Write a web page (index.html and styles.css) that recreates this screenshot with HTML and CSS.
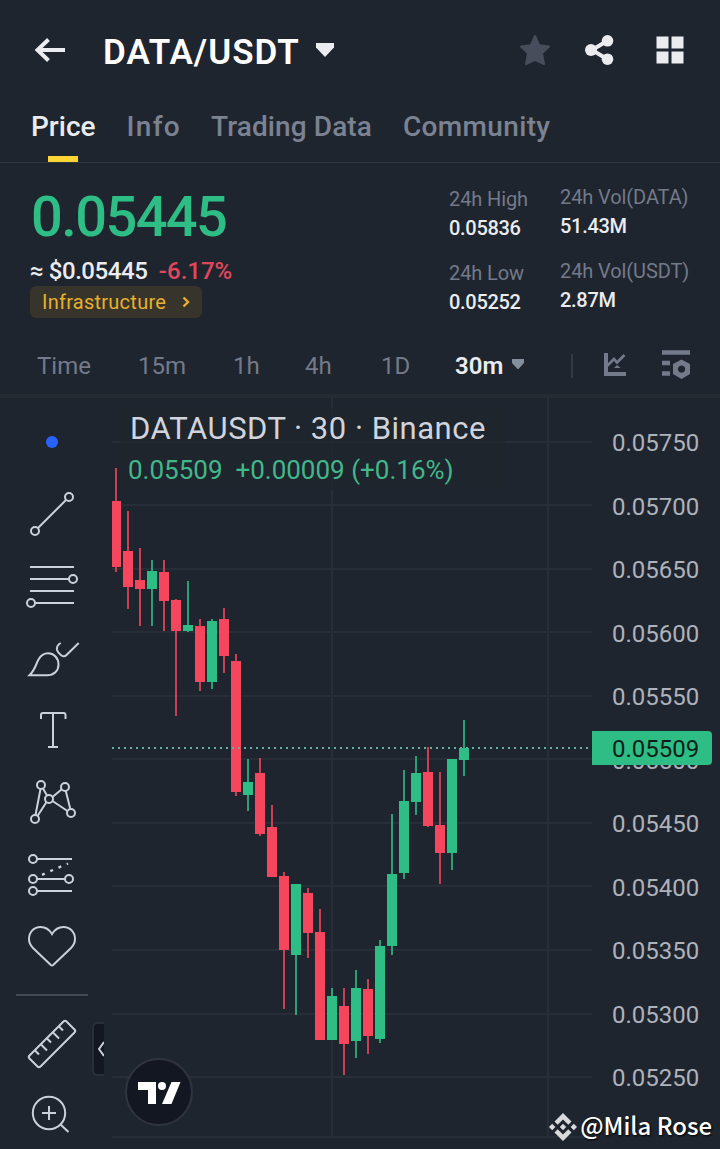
FILE: index.html
```html
<!DOCTYPE html>
<html lang="en">
<head>
    <meta charset="UTF-8">
    <meta name="viewport" content="width=device-width, initial-scale=1.0">
    <link rel="stylesheet" href="styles.css">
    <title>DATA/USDT</title>
</head>
<body>
    <header class="header">
        <svg class="back" width="32" height="26" viewBox="0 0 32 26">
            <path d="M14.5 2.500L3.500 13L14.500 23.500M4 13H31" fill="none" stroke="#eaecef" stroke-width="4"/>
        </svg>
        <h1>DATA/USDT</h1>
        <svg class="caret" width="18" height="14" viewBox="0 0 18 14"><path d="M0 0H18V4.500L9 14L0 4.500Z" fill="#eaecef"/></svg>
        <div class="header-icons">
            <svg width="32" height="32" viewBox="0 0 32 32">
                <path d="M16 2L20.200 11.300L30 12.500L23 19.300L25 30L16 25.800L7 30L9 19.300L2 12.500L11.800 11.300Z" fill="#474d5b" stroke="#474d5b" stroke-width="2" stroke-linejoin="round"/>
            </svg>
            <svg width="32" height="32" viewBox="0 0 32 32" fill="#eaecef">
                <path d="M24 7L9 16L24 25" fill="none" stroke="#eaecef" stroke-width="4"/>
                <circle cx="24.500" cy="6.800" r="5.800"/>
                <circle cx="8" cy="16" r="6"/>
                <circle cx="24.500" cy="25.200" r="5.800"/>
            </svg>
            <svg width="28" height="28" viewBox="0 0 28 28" fill="#eaecef">
                <path d="M0.500 0.500H12.500V12.500H0.500ZM15.500 0.500H27.500V12.500H15.500ZM0.500 15.500H12.500V27.500H0.500ZM15.500 15.500H27.500V27.500H15.500Z"/>
            </svg>
        </div>
    </header>

    <nav class="tabs">
        <a class="active">Price</a>
        <a class="info">Info</a>
        <a class="trading">Trading Data</a>
        <a class="community">Community</a>
    </nav>

    <section class="ticker">
        <div class="ticker-main">
            <div class="price">0.05445</div>
            <div class="fiat">≈ $0.05445 <span class="change">-6.17%</span></div>
            <div class="tag">Infrastructure
                <svg width="8" height="12" viewBox="0 0 8 12"><path d="M1.500 1.500L6 6L1.500 10.500" fill="none" stroke="#e8b02c" stroke-width="2.400"/></svg>
            </div>
        </div>
        <div class="stats">
            <div class="stat"><span>24h High</span><b>0.05836</b></div>
            <div class="stat"><span>24h Low</span><b>0.05252</b></div>
        </div>
        <div class="stats volume">
            <div class="stat"><span>24h Vol(DATA)</span><b>51.43M</b></div>
            <div class="stat"><span>24h Vol(USDT)</span><b>2.87M</b></div>
        </div>
    </section>

    <div class="intervals">
        <span>Time</span>
        <span>15m</span>
        <span>1h</span>
        <span>4h</span>
        <span>1D</span>
        <span class="selected">30m <svg width="12" height="10" viewBox="0 0 12 10"><path d="M0 0H12V4L6.500 10H5.500L0 4Z" fill="#848e9c"/></svg></span>
        <i class="separator"></i>
        <svg width="22" height="23" viewBox="0 0 22 23">
            <path d="M2 0V21H22" fill="none" stroke="#737a8a" stroke-width="4"/>
            <path d="M3 13L10 6L13 9.500L20.500 2" fill="none" stroke="#737a8a" stroke-width="2.600"/>
            <path d="M10 15L13 12L16.500 15Z" fill="#737a8a"/>
        </svg>
        <svg class="settings" width="28" height="29" viewBox="0 0 28 29">
            <path d="M0 2.500H28M0 13H8M0 23.500H8" stroke="#737a8a" stroke-width="4.600"/>
            <path d="M19.500 9.500L28 14V24L19.500 29L11 24V14ZM19.500 15.500A3.600 3.600 0 1 0 19.600 15.500Z" fill="#737a8a" fill-rule="evenodd"/>
        </svg>
    </div>

    <main class="chart">
        <div class="tools">
            <svg viewBox="0 0 72 72"><circle cx="36" cy="36" r="6" class="dot"/></svg>
            <svg viewBox="0 0 72 72">
                <path d="M22 50L50 22"/>
                <circle cx="53" cy="19" r="4"/><circle cx="19" cy="53" r="4"/>
            </svg>
            <svg viewBox="0 0 72 72">
                <path d="M14 17H58M14 29H53M14 41H58M19 53H58"/>
                <circle cx="57" cy="29" r="4"/><circle cx="15" cy="53" r="4"/>
            </svg>
            <svg viewBox="0 0 72 72">
                <path d="M13.500 53.300C19 48 20 42 22.500 37.500C25 33 28 31.300 32 31.300C38 31.300 42.500 36 42.500 42.500C42.500 49 38 53.300 31 53.300Z"/>
                <path d="M44.700 21C42 22.500 40.500 25 41 28C42 31 44 32 45.500 33.500C47 34.500 49 34.500 50.500 33L62.700 21"/>
            </svg>
            <svg viewBox="0 0 72 72">
                <path d="M25 25V21Q25 19 27 19H47.500Q49.500 19 49.500 21V25M37 19V53M32 53H42"/>
            </svg>
            <svg viewBox="0 0 72 72">
                <path d="M27 22.500L31 29.500M36.500 31L45.500 23.500M49.800 25L54.300 43M36.500 35L51.500 45M30.500 36L21.500 50M24.500 23L19.500 49"/>
                <circle cx="25" cy="19" r="4"/><circle cx="49" cy="21" r="4"/><circle cx="33" cy="33" r="4"/>
                <circle cx="55" cy="47" r="4"/><circle cx="19" cy="53" r="4"/>
            </svg>
            <svg viewBox="0 0 72 72">
                <path d="M21 21H56M21 41H49M21 53H56"/>
                <path d="M26 36.800L52 25.500" stroke-width="2.400" stroke-dasharray="3 6"/>
                <circle cx="17" cy="21" r="4"/><circle cx="17" cy="41" r="4"/><circle cx="53" cy="41" r="4"/><circle cx="17" cy="53" r="4"/>
            </svg>
            <svg viewBox="0 0 72 72">
                <path d="M36 24C33 19 29 17 24.500 17C18 17 13 22 13 29C13 32.500 14.500 35.500 17 38L34.800 55Q36 56 37.200 55L55 38C57.500 35.500 59 32.500 59 29C59 22 54 17 47.500 17C43 17 39 19 36 24Z"/>
            </svg>
            <hr>
            <svg viewBox="0 0 72 72">
                <path d="M47.500 13.500Q49 12 50.500 13.500L58.500 21.500Q60 23 58.500 24.500L24.500 58.500Q23 60 21.500 58.500L13.500 50.500Q12 49 13.500 47.500Z"/>
                <path d="M19 42.500L23 46.500M25 36.500L31 42.500M31 30.500L35 34.500M37 24.500L43 30.500M43 18.500L47 22.500"/>
            </svg>
            <svg viewBox="0 0 72 72">
                <circle cx="33" cy="33" r="16.200"/>
                <path d="M26 33H40M33 26V40M44.500 44.500L52.500 52"/>
            </svg>
            <div class="collapse">
                <svg width="6" height="16" viewBox="0 0 6 16"><path d="M6 1L1 8L6 15"/></svg>
            </div>
        </div>

        <div class="plot">
            <svg id="candles" width="480" height="751" viewBox="112 398 480 751" shape-rendering="crispEdges"></svg>
            <div class="legend">
                <div class="symbol">DATAUSDT · 30 · Binance</div>
                <div class="values">0.05509&nbsp; +0.00009 (+0.16%)</div>
            </div>
            <svg class="tv-logo" width="68" height="68" viewBox="0 0 68 68">
                <circle cx="34" cy="34" r="33" fill="#131722" stroke="#30343f" stroke-width="2"/>
                <path d="M13 24H31V46H23V32H13ZM46.500 24H55.500L46.500 46H37Z" fill="#fff"/>
                <circle cx="37" cy="28" r="4" fill="#fff"/>
            </svg>
        </div>

        <div class="axis">
            <span>0.05750</span>
            <span>0.05700</span>
            <span>0.05650</span>
            <span>0.05600</span>
            <span>0.05550</span>
            <span>0.05500</span>
            <span>0.05450</span>
            <span>0.05400</span>
            <span>0.05350</span>
            <span>0.05300</span>
            <span>0.05250</span>
            <div class="last-price">0.05509</div>
        </div>

        <div class="watermark">
            <svg width="28" height="28" viewBox="0 0 28 28" fill="#d9dadb">
                <path d="M14 0L22.500 8.500L19.300 11.700L14 6.400L8.700 11.700L5.500 8.500ZM14 28L22.500 19.500L19.300 16.300L14 21.600L8.700 16.300L5.500 19.500ZM3.200 10.800L6.400 14L3.200 17.200L0 14ZM24.800 10.800L28 14L24.800 17.200L21.600 14ZM14 10.800L17.200 14L14 17.200L10.800 14Z"/>
            </svg>
            <span>@Mila Rose</span>
        </div>
    </main>

    <script>
        const svg = document.getElementById('candles');
        const up = '#2ebd85';
        const down = '#f6465d';

        // high, body top, body bottom, low, color
        const candles = [
            [468, 501, 567, 572, down],
            [511, 551, 587, 609, down],
            [548, 580, 589, 626, down],
            [560, 571, 589, 626, up],
            [560, 572, 601, 631, down],
            [599, 600, 631, 716, down],
            [581, 625, 631, 632, up],
            [619, 626, 682, 691, down],
            [619, 621, 682, 689, up],
            [608, 619, 656, 673, down],
            [654, 661, 792, 796, down],
            [759, 782, 795, 811, up],
            [758, 773, 834, 836, down],
            [805, 827, 877, 877, down],
            [872, 876, 950, 1009, down],
            [884, 884, 955, 1015, up],
            [888, 893, 933, 958, down],
            [909, 932, 1040, 1040, down],
            [988, 996, 1040, 1040, up],
            [988, 1006, 1044, 1075, down],
            [970, 988, 1041, 1058, up],
            [979, 989, 1036, 1054, down],
            [940, 946, 1039, 1043, up],
            [814, 874, 946, 955, up],
            [770, 801, 873, 879, up],
            [756, 773, 802, 815, up],
            [747, 772, 826, 827, down],
            [772, 825, 853, 884, down],
            [759, 759, 853, 870, up],
            [720, 748, 760, 776, up]
        ];

        let html = '';

        [442, 505, 569, 632, 696, 759, 823, 886, 950, 1014, 1077, 1137].forEach(y => {
            html += `<rect x="112" y="${y - 1}" width="480" height="2" fill="#282e37"/>`;
        });
        [332, 548].forEach(x => {
            html += `<rect x="${x - 1}" y="398" width="2" height="739" fill="#282e37"/>`;
        });

        candles.forEach(([high, top, bottom, low, color], i) => {
            const x = 116 + i * 12;
            html += `<rect x="${x - 1}" y="${high}" width="2" height="${low - high}" fill="${color}" opacity="0.8"/>`;
            html += `<rect x="${x - 5}" y="${top}" width="10" height="${bottom - top}" fill="${color}"/>`;
        });

        html += '<path d="M112 748H592" stroke="#64b09b" stroke-width="2" stroke-dasharray="2 4"/>';
        svg.innerHTML = html;
    </script>
</body>
</html>
```
FILE: styles.css
```css
* {
    box-sizing: border-box;
}

body {
    margin: 0;
    width: 720px;
    height: 1149px;
    overflow: hidden;
    background-color: #1f252e;
    color: #eaecef;
    font-family: Roboto, "Liberation Sans", sans-serif;
}

svg {
    display: block;
}

.header {
    display: flex;
    align-items: center;
    height: 100px;
    padding: 0 36px 0 34px;
}

.header h1 {
    margin: 4px 0 0 37px;
    width: 213px;
    font-size: 35px;
    font-weight: 600;
    letter-spacing: 1px;
    color: #fff;
    white-space: nowrap;
}

.header-icons {
    display: flex;
    align-items: center;
    margin-left: auto;
}

.header-icons svg + svg {
    margin-left: 32px;
}

.header-icons svg:last-child {
    margin-left: 41px;
}

.tabs {
    display: flex;
    height: 63px;
    padding-left: 31px;
    border-bottom: 1px solid #303640;
    font-size: 28px;
    font-weight: 500;
    line-height: 53px;
    color: #7b8291;
    white-space: nowrap;
}

.tabs a {
    position: relative;
    margin-right: 31px;
}

.tabs .active {
    color: #eaecef;
}

.tabs .info {
    margin-right: 30px;
    letter-spacing: 1.3px;
}

.tabs .trading {
    letter-spacing: 0.1px;
}

.tabs .community {
    letter-spacing: 0.35px;
}

.tabs .active::after {
    content: "";
    position: absolute;
    left: 17px;
    bottom: 0;
    width: 30px;
    height: 6px;
    background-color: #fcd535;
}

.ticker {
    display: flex;
    height: 177px;
    padding-left: 30px;
}

.ticker-main {
    width: 419px;
    padding-top: 21px;
}

.price {
    padding-left: 1px;
    font-size: 56px;
    font-weight: 500;
    line-height: 67px;
    letter-spacing: -1.6px;
    color: #2ebd85;
}

.fiat {
    margin-top: 6px;
    font-size: 24px;
    font-weight: 500;
    line-height: 29px;
    letter-spacing: -0.45px;
}

.change {
    margin-left: 6px;
    letter-spacing: 0;
    color: #e0475d;
}

.tag {
    display: flex;
    align-items: center;
    justify-content: space-between;
    width: 172px;
    height: 32px;
    padding: 0 12px;
    border-radius: 6px;
    background-color: #37342c;
    font-size: 20px;
    letter-spacing: 0.25px;
    color: #e8b02c;
}

.stats {
    width: 111px;
    padding-top: 22px;
    white-space: nowrap;
}

.volume {
    width: auto;
    padding-top: 20px;
}

.stat {
    display: flex;
    flex-direction: column;
    height: 74px;
    font-size: 20px;
    line-height: 29px;
}

.stat span {
    letter-spacing: -0.1px;
    color: #737a8a;
}

.stat b {
    font-weight: 500;
    letter-spacing: -0.3px;
}

.intervals {
    display: grid;
    grid-template-columns: 101px 95px 72px 76px 74px 116px 32px 58px 28px;
    align-items: center;
    height: 54px;
    padding: 0 0 3px 37px;
    font-size: 24px;
    color: #737a8a;
}

.intervals > svg {
    margin: -2px 0 0 1px;
}

.intervals .selected {
    display: flex;
    align-items: center;
    gap: 9px;
    font-weight: 600;
    color: #eaecef;
}

.intervals .selected svg {
    margin-top: -4px;
}

.separator {
    width: 2px;
    height: 24px;
    background-color: #343a45;
}

.chart {
    position: relative;
    display: flex;
    height: 755px;
    border-top: 4px solid #252a33;
}

.tools {
    position: relative;
    display: flex;
    flex-direction: column;
    align-items: center;
    flex: none;
    width: 104px;
    padding-top: 8px;
}

.tools svg {
    flex: none;
    width: 72px;
    height: 72px;
    fill: none;
    stroke: #ccd0d9;
    stroke-width: 2;
}

.tools .dot {
    fill: #2962ff;
    stroke: none;
}

.tools hr {
    flex: none;
    width: 72px;
    height: 2px;
    margin: 12px 0;
    border: none;
    background-color: #434853;
}

/* handle that hides the drawing toolbar */
.collapse {
    position: absolute;
    right: 0;
    top: 624px;
    display: flex;
    align-items: center;
    justify-content: flex-end;
    width: 12px;
    height: 54px;
    border: 2px solid #292e37;
    border-right: none;
    border-radius: 6px 0 0 6px;
    background-color: #131722;
}

.tools .collapse svg {
    width: 6px;
    height: 16px;
}

.plot {
    position: relative;
    width: 480px;
    margin-left: 8px;
}

.legend {
    position: absolute;
    left: 8px;
    top: 10px;
    width: 385px;
    height: 82px;
    padding-left: 10px;
    background-color: rgba(31, 37, 46, 0.75);
    white-space: nowrap;
}

.symbol {
    font-size: 31px;
    line-height: 42px;
    letter-spacing: 0.5px;
    color: #d1d4dc;
}

.values {
    margin-left: -2px;
    font-size: 26px;
    line-height: 40px;
    color: #42b78b;
}

.tv-logo {
    position: absolute;
    left: 13px;
    top: 660px;
}

.axis {
    position: relative;
    width: 128px;
    padding: 14px 0 0 20px;
    font-size: 24px;
    color: #aeb2bb;
}

.axis span {
    display: block;
    height: 63.500px;
    line-height: 63.500px;
}

.last-price {
    position: absolute;
    left: 0;
    top: 333px;
    width: 120px;
    height: 34px;
    padding-left: 20px;
    border-radius: 0 4px 4px 0;
    background-color: #2ebd85;
    line-height: 36px;
    color: #0c1f18;
}

.watermark {
    position: absolute;
    right: 8px;
    bottom: 6px;
    display: flex;
    align-items: center;
    gap: 3px;
    font-family: "Noto Sans CJK SC", "Noto Sans", sans-serif;
    font-size: 24px;
    font-weight: 500;
    line-height: 36px;
    color: #fff;
    text-shadow: 1px 1px 2px #000;
}

.watermark span {
    margin-top: -3px;
}
```
